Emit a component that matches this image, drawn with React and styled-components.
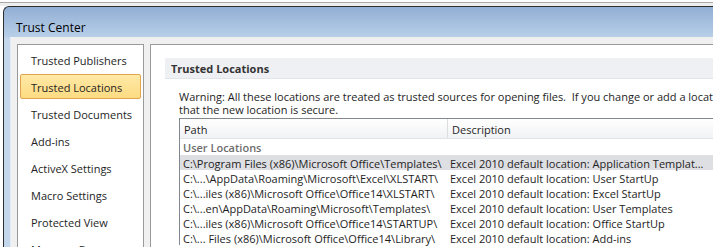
import React from "react";
import styled, { createGlobalStyle } from "styled-components";

const GlobalStyle = createGlobalStyle`
  html, body {
    margin: 0;
    padding: 0;
    background: #fff;
  }
  body {
    font-family: "Open Sans", "Noto Sans", sans-serif;
    font-size: 11px;
    color: #1e1e1e;
  }
`;

const Page = styled.div`
  width: 713px;
  height: 247px;
  overflow: hidden;
  display: flex;
  flex-direction: column;
  background: #fff;
`;

const ExcelStrip = styled.div`
  height: 6px;
  flex: none;
  background: linear-gradient(#fff 0 2px, #a9a9a9 2px 3px, #eeeeee 3px);
`;

const Window = styled.div`
  flex: 1;
  margin-left: 3px;
  display: flex;
  flex-direction: column;
  border-top: 1px solid #2e2e2e;
  border-left: 1px solid #2e2e2e;
  border-top-left-radius: 6px;
  background: linear-gradient(#91aed4 0, #b8cfe8 30px, #c3d6ec 31px);
  min-height: 0;
`;

const TitleBar = styled.div`
  height: 30px;
  flex: none;
  box-sizing: border-box;
  padding: 13px 0 0 12px;
  line-height: 15px;
  font-size: 12px;
  color: #000;
`;

const Client = styled.div`
  flex: 1;
  margin-left: 6px;
  border-left: 1px solid #e4ecf5;
  background: #f0f0f0;
  display: flex;
  gap: 6px;
  padding: 7px 0 0 6px;
  min-height: 0;
`;

const Nav = styled.div`
  width: 127px;
  flex: none;
  box-sizing: border-box;
  border: 1px solid #9a9a9a;
  border-bottom: none;
  background: #fff;
  padding: 2px 2px 0;
  display: flex;
  flex-direction: column;
  gap: 2px;
`;

const NavItem = styled.div`
  height: 25px;
  flex: none;
  box-sizing: border-box;
  display: flex;
  align-items: center;
  padding: 1px 0 0 10px;
  border: 1px solid ${(p) => (p.$active ? "#e2a44f" : "transparent")};
  border-radius: 2px;
  background: ${(p) =>
    p.$active ? "linear-gradient(#fee9a6, #fddb82)" : "transparent"};
  color: #1e1e1e;
  white-space: nowrap;
`;

const Panel = styled.div`
  flex: none;
  width: 620px;
  box-sizing: border-box;
  border: 1px solid #9a9a9a;
  border-right: none;
  border-bottom: none;
  background: #fff;
  padding: 13px 0 0 14px;
  overflow: hidden;
`;

const SectionHeader = styled.div`
  height: 21px;
  box-sizing: border-box;
  display: flex;
  align-items: center;
  padding: 1px 0 0 6px;
  background: #eef0f3;
  border-bottom: 1px solid #e1e4e8;
  font-weight: 700;
  color: #333;
`;

const Warning = styled.div`
  margin: 11px 0 0 14px;
  line-height: 13px;
  white-space: nowrap;
`;

const Table = styled.div`
  margin: 2px 0 0 14px;
  border: 1px solid #828790;
  border-right: none;
  border-bottom: none;
`;

const HeaderRow = styled.div`
  display: grid;
  grid-template-columns: 268px 1fr;
  height: 20px;
  box-sizing: border-box;
  background: linear-gradient(#fff, #f1f2f4);
  border-bottom: 1px solid #e3e4e6;
`;

const HeaderCell = styled.div`
  display: flex;
  align-items: center;
  padding: 2px 0 0 ${(p) => p.$pad}px;
  border-right: ${(p) => (p.$divider ? "1px solid #dcdde0" : "none")};
`;

const GroupRow = styled.div`
  height: 16px;
  display: flex;
  align-items: center;
  padding: 1px 0 0 3px;
  box-sizing: border-box;
  font-weight: 600;
  color: #6e6e6e;
`;

const Row = styled.div`
  display: grid;
  grid-template-columns: 268px 1fr;
  height: 15px;
  padding-top: 2px;
  box-sizing: border-box;
  align-items: center;
  background: ${(p) => (p.$selected ? "#dedfe3" : "transparent")};
  white-space: nowrap;
`;

const Cell = styled.div`
  padding-left: ${(p) => p.$pad}px;
  overflow: hidden;
`;

const navItems = [
  "Trusted Publishers",
  "Trusted Locations",
  "Trusted Documents",
  "Add-ins",
  "ActiveX Settings",
  "Macro Settings",
  "Protected View",
  "Message Bar",
];

const locations = [
  ["C:\\Program Files (x86)\\Microsoft Office\\Templates\\", "Excel 2010 default location: Application Templat..."],
  ["C:\\...\\AppData\\Roaming\\Microsoft\\Excel\\XLSTART\\", "Excel 2010 default location: User StartUp"],
  ["C:\\...iles (x86)\\Microsoft Office\\Office14\\XLSTART\\", "Excel 2010 default location: Excel StartUp"],
  ["C:\\...en\\AppData\\Roaming\\Microsoft\\Templates\\", "Excel 2010 default location: User Templates"],
  ["C:\\...iles (x86)\\Microsoft Office\\Office14\\STARTUP\\", "Excel 2010 default location: Office StartUp"],
  ["C:\\... Files (x86)\\Microsoft Office\\Office14\\Library\\", "Excel 2010 default location: Add-ins"],
];

export default function App() {
  return (
    <Page>
      <GlobalStyle />
      <ExcelStrip />
      <Window>
        <TitleBar>Trust Center</TitleBar>
        <Client>
          <Nav>
            {navItems.map((item) => (
              <NavItem key={item} $active={item === "Trusted Locations"}>
                {item}
              </NavItem>
            ))}
          </Nav>
          <Panel>
            <SectionHeader>Trusted Locations</SectionHeader>
            <Warning>
              Warning: All these locations are treated as trusted sources for opening files.{"\u00a0 "}If you change or add a location, ensure
              <br />
              that the new location is secure.
            </Warning>
            <Table>
              <HeaderRow>
                <HeaderCell $pad={4} $divider>Path</HeaderCell>
                <HeaderCell $pad={4}>Description</HeaderCell>
              </HeaderRow>
              <GroupRow>User Locations</GroupRow>
              {locations.map(([path, desc], i) => (
                <Row key={path} $selected={i === 0}>
                  <Cell $pad={3}>{path}</Cell>
                  <Cell $pad={2}>{desc}</Cell>
                </Row>
              ))}
            </Table>
          </Panel>
        </Client>
      </Window>
    </Page>
  );
}
